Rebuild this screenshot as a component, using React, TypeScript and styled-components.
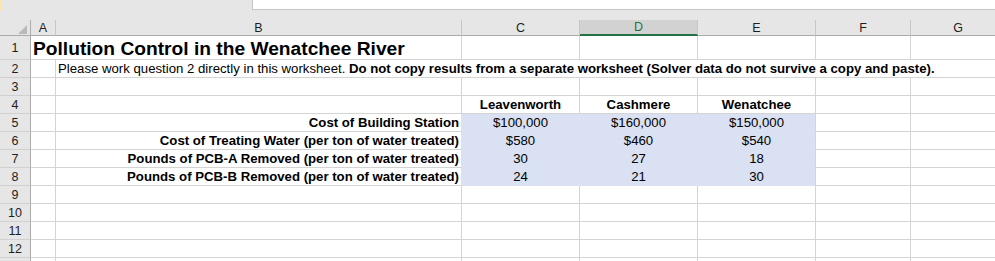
import styled, { createGlobalStyle } from "styled-components"

const GRID = "#d4d4d4"
const FILL = "#d9e1f2"
const HEAD_BG = "#e6e6e6"

const GlobalStyle = createGlobalStyle`
	html, body {
		margin: 0;
		padding: 0;
		background: #fff;
	}
	body {
		font-family: "Liberation Sans", Arial, sans-serif;
	}
`

const Page = styled.div`
	width: 995px;
	height: 261px;
	overflow: hidden;
	background: #fff;
`

const TopBar = styled.div`
	display: flex;
	align-items: flex-start;
	height: 20px;
	background: ${HEAD_BG};
`

const NameStub = styled.div`
	width: 2px;
	height: 11px;
	background: #fbe7a8;
`

const FormulaBox = styled.div`
	flex: 1;
	height: 9px;
	margin-left: 250px;
	background: #fff;
	border-left: 1px solid #c6c6c6;
	border-bottom: 1px solid #c6c6c6;
`

// row header + columns A..G
const Sheet = styled.div`
	display: grid;
	grid-template-columns: 31px 25px 406px 118px 118px 118px 95px 95px;
	grid-template-rows: 16px 24px repeat(12, 18px);
	width: 1006px;
`

const Corner = styled.div`
	box-sizing: border-box;
	display: flex;
	align-items: flex-end;
	justify-content: flex-end;
	padding: 0 3px 1px 0;
	background: ${HEAD_BG};
	border-right: 1px solid #ababab;
	border-bottom: 1px solid #ababab;
`

const ColHead = styled.div<{ $selected?: boolean }>`
	box-sizing: border-box;
	display: flex;
	align-items: center;
	justify-content: center;
	background: ${({ $selected }) => ($selected ? "#d2d2d2" : HEAD_BG)};
	color: ${({ $selected }) => ($selected ? "#217346" : "#1e1e1e")};
	border-right: 1px solid #c6c6c6;
	border-bottom: ${({ $selected }) => ($selected ? "2px solid #217346" : "1px solid #ababab")};
	font-size: 12.5px;
`

const RowHead = styled.div`
	box-sizing: border-box;
	display: flex;
	align-items: center;
	justify-content: center;
	padding-top: 1px;
	background: ${HEAD_BG};
	color: #1e1e1e;
	border-right: 1px solid #ababab;
	border-bottom: 1px solid #d0d0d0;
	font-size: 12.5px;
`

type CellProps = {
	$align?: "left" | "center" | "right"
	$bold?: boolean
	$fill?: boolean
	$span?: number
	$edge?: boolean
	$fillRight?: boolean
	$title?: boolean
}

const Cell = styled.div<CellProps>`
	box-sizing: border-box;
	display: flex;
	align-items: flex-end;
	justify-content: ${({ $align }) =>
		$align === "center" ? "center" : $align === "right" ? "flex-end" : "flex-start"};
	grid-column: span ${({ $span }) => $span ?? 1};
	min-width: 0;
	padding: 0 2px;
	background: ${({ $fill }) => ($fill ? FILL : "transparent")};
	border-right: 1px solid
		${({ $fill, $edge, $fillRight }) => (($fill && !$edge) || $fillRight ? FILL : GRID)};
	border-bottom: 1px solid ${({ $fill }) => ($fill ? FILL : GRID)};
	color: #000;
	font-size: ${({ $title }) => ($title ? "19.2px" : "13.2px")};
	font-weight: ${({ $bold, $title }) => ($bold || $title ? 700 : 400)};
	line-height: ${({ $title }) => ($title ? 1.12 : 1.1)};
	white-space: nowrap;
	overflow: visible;
`

const Text = styled.span``

const Strong = styled.span`
	font-weight: 700;
`

const COLS = ["A", "B", "C", "D", "E", "F", "G"]

const towns = ["Leavenworth", "Cashmere", "Wenatchee"]

const table = [
	{ label: "Cost of Building Station", values: ["$100,000", "$160,000", "$150,000"] },
	{ label: "Cost of Treating Water (per ton of water treated)", values: ["$580", "$460", "$540"] },
	{ label: "Pounds of PCB-A Removed (per ton of water treated)", values: ["30", "27", "18"] },
	{ label: "Pounds of PCB-B Removed (per ton of water treated)", values: ["24", "21", "30"] },
]

function Blanks({ count }: { count: number }) {
	return (<>
		{Array.from({ length: count }, (_, i) => <Cell key={i}/>)}
	</>)
}

function Row({ n, label, values }: { n: number, label: string, values: string[] }) {
	return (<>
		<RowHead>{n}</RowHead>
		<Cell/>
		<Cell $align="right" $bold $fillRight>{label}</Cell>
		{values.map((v, i) => (
			<Cell key={i} $align="center" $fill $edge={i === values.length - 1}>{v}</Cell>
		))}
		<Blanks count={2}/>
	</>)
}

// row 13 is only a sliver at the bottom edge, its number is out of view
function EmptyRow({ n }: { n: number }) {
	return (<>
		<RowHead>{n < 13 ? n : null}</RowHead>
		<Blanks count={7}/>
	</>)
}

export default function App() {
	return (<>
		<GlobalStyle/>
		<Page>
			<TopBar>
				<NameStub/>
				<FormulaBox/>
			</TopBar>
			<Sheet>
				<Corner>
					<svg width="9" height="9" viewBox="0 0 9 9">
						<polygon points="9,0 9,9 0,9" fill="#b9b9b9"/>
					</svg>
				</Corner>
				{COLS.map(c => (
					<ColHead key={c} $selected={c === "D"}>{c}</ColHead>
				))}

				<RowHead>1</RowHead>
				<Cell $span={2} $title>Pollution Control in the Wenatchee River</Cell>
				<Blanks count={5}/>

				<RowHead>2</RowHead>
				<Cell/>
				<Cell $span={6}>
					<Text>
						Please work question 2 directly in this worksheet.{" "}
						<Strong>Do not copy results from a separate worksheet (Solver data do not survive a copy and paste).</Strong>
					</Text>
				</Cell>

				<RowHead>3</RowHead>
				<Blanks count={7}/>

				<RowHead>4</RowHead>
				<Blanks count={2}/>
				{towns.map(t => (
					<Cell key={t} $align="center" $bold>{t}</Cell>
				))}
				<Blanks count={2}/>

				{table.map((row, i) => (
					<Row key={row.label} n={5 + i} label={row.label} values={row.values}/>
				))}

				{[9, 10, 11, 12, 13].map(n => (
					<EmptyRow key={n} n={n}/>
				))}
			</Sheet>
		</Page>
	</>)
}
